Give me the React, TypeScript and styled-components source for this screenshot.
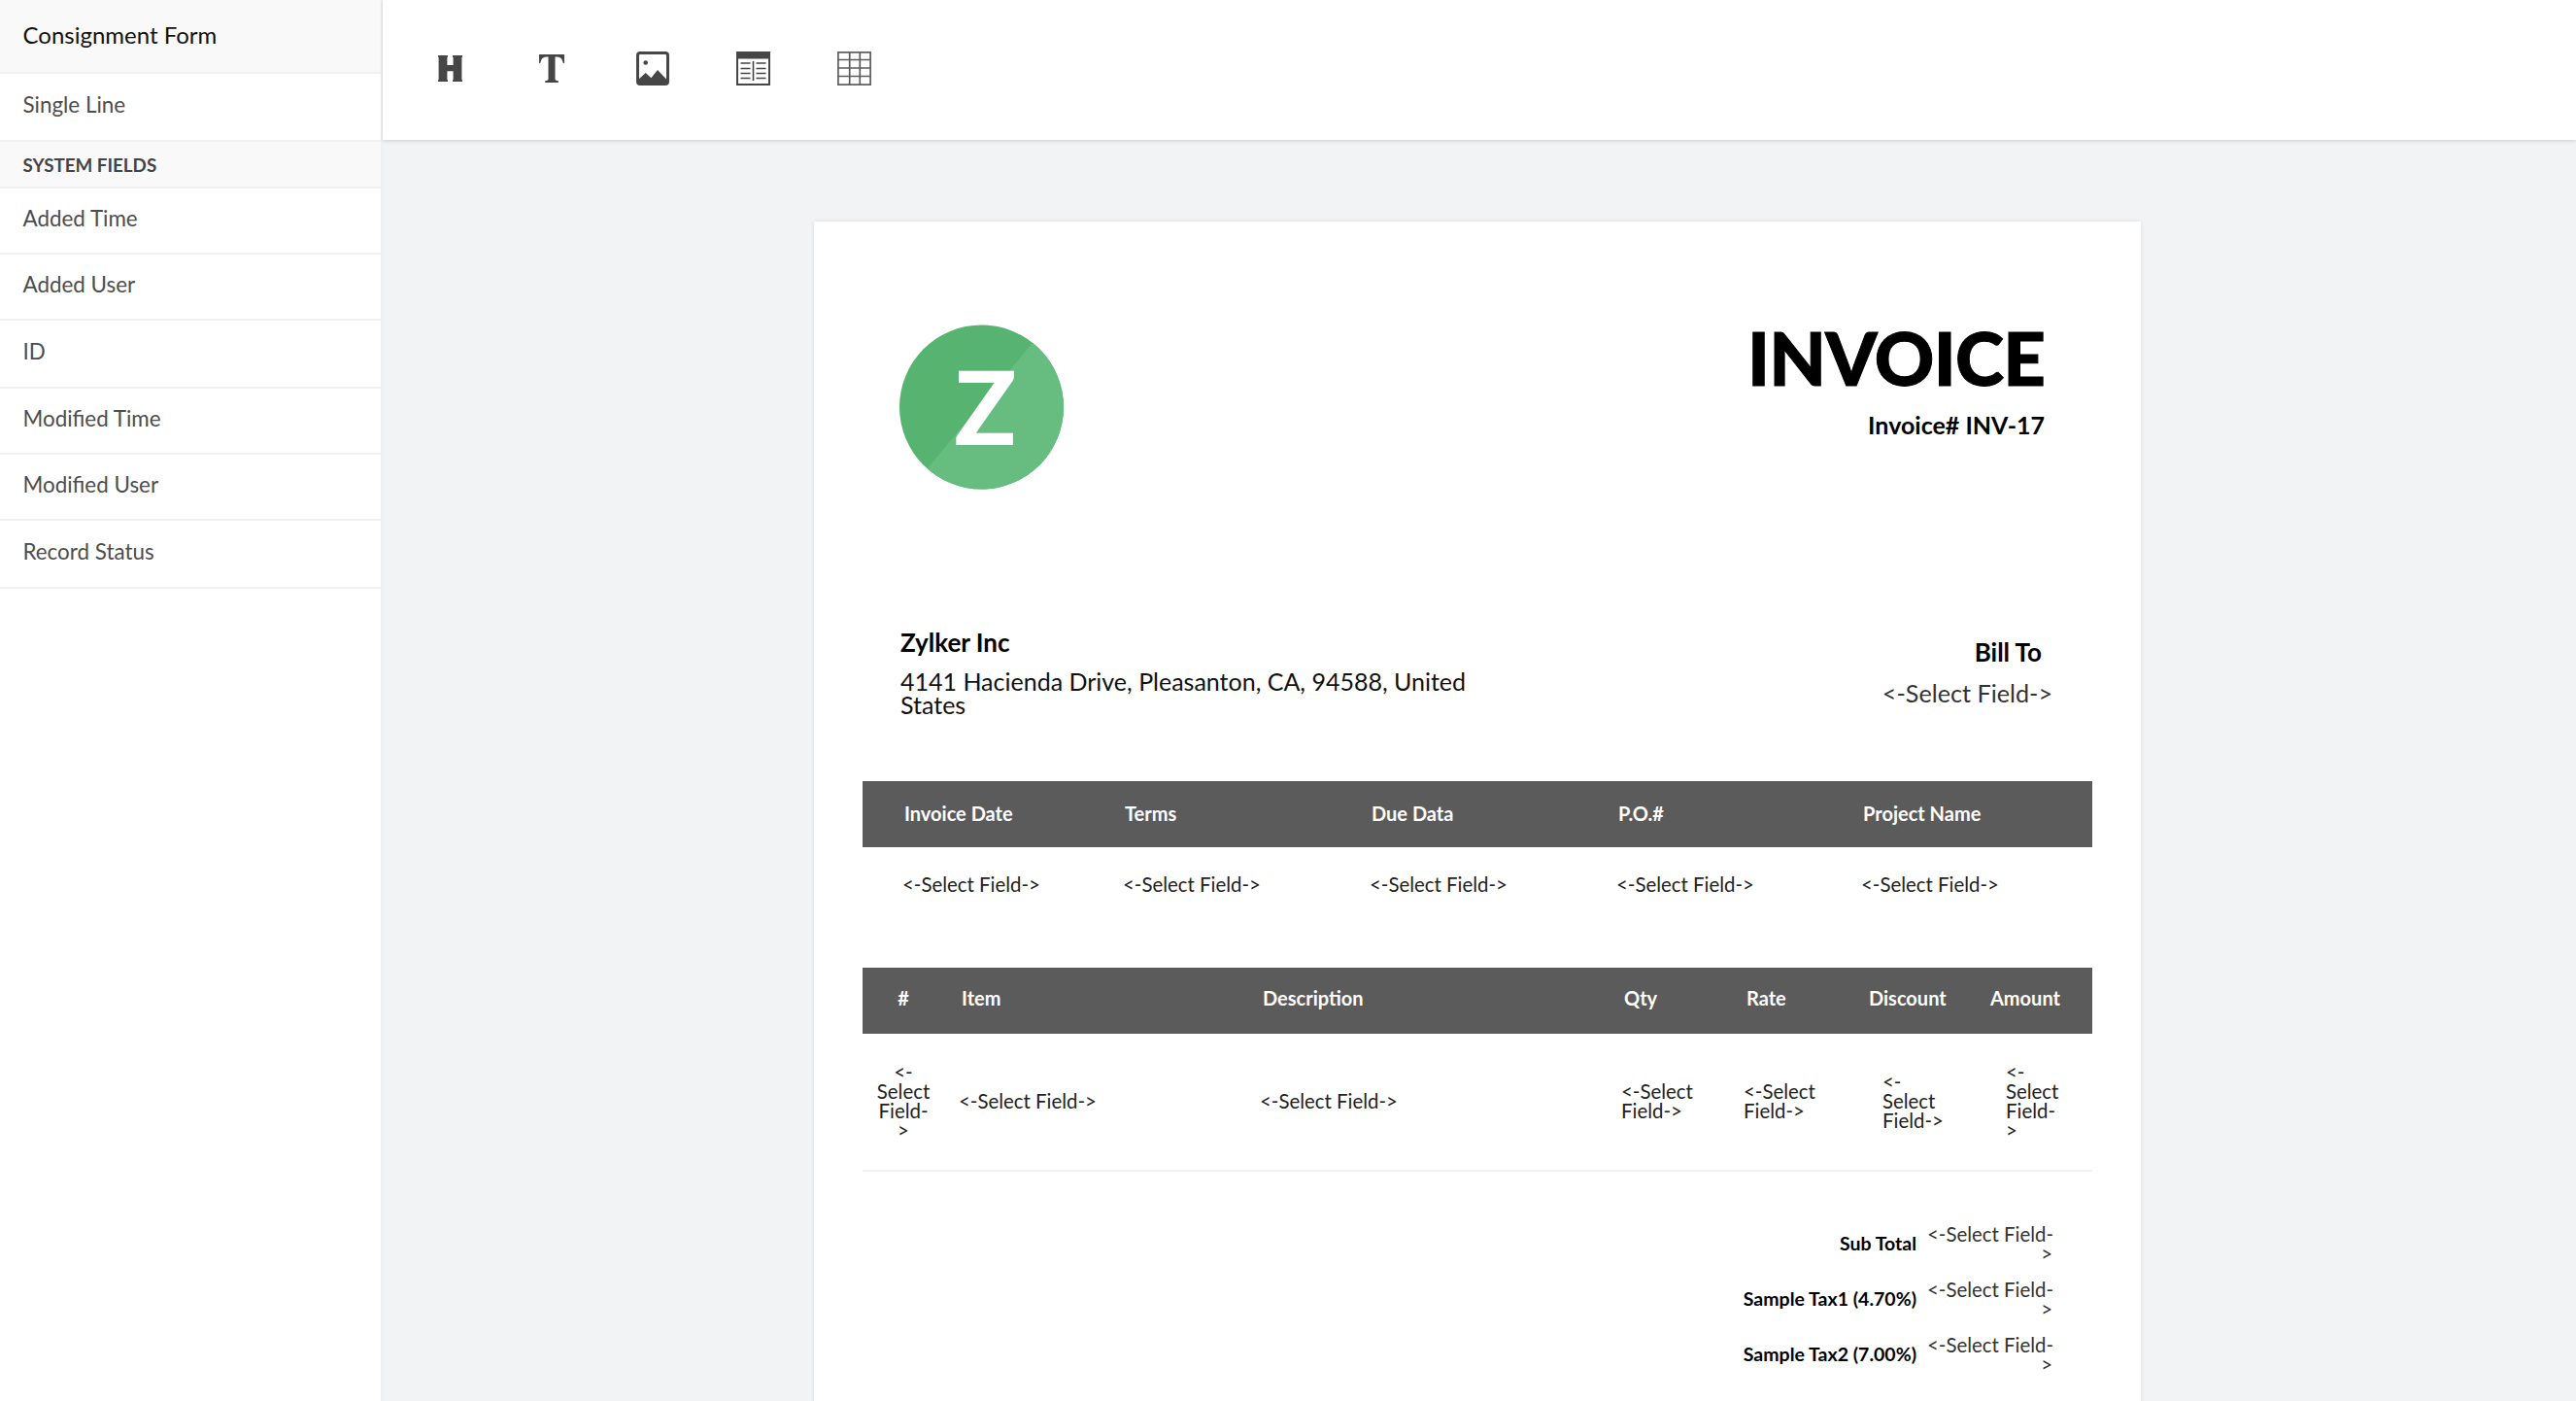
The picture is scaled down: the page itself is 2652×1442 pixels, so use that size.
import React from "react";
import styled, { createGlobalStyle } from "styled-components";

const Global = createGlobalStyle`
  html, body, #root { margin: 0; padding: 0; height: 100%; overflow: hidden; }
  body { font-family: "Lato", "Liberation Sans", sans-serif; background: #fff; }
`;
const Shell = styled.div`display: flex; height: 1442px; width: 2652px; overflow: hidden;`;
const Sidebar = styled.aside`width: 392px; flex: none; border-right: 2px solid #f0f0f0; background: #fff;`;
const FormTitle = styled.div`
  height: 70px; padding: 0 23.5px 4px; border-bottom: 2px solid #f1f1f1; background: #f9f9f9;
  display: flex; align-items: center; font-size: 24px; color: #111;
`;
const Field = styled.div<{ $h: number }>`
  height: ${p => p.$h - 5}px; border-bottom: 2px solid #f1f1f1; padding: 0 23.5px 5px;
  display: flex; align-items: center; font-size: 22.4px; color: #4d4d4d;
`;
const SectionLabel = styled.div`
  height: 46px; border-bottom: 2px solid #f1f1f1; background: #f9f9f9; padding: 0 23.5px;
  display: flex; align-items: center; font-size: 18.8px; font-weight: 700; color: #444;
`;
const Main = styled.main`flex: 1; min-width: 0; display: flex; flex-direction: column; background: #f2f3f5;`;
const Toolbar = styled.div`
  height: 144px; flex: none; box-sizing: border-box; background: #fff; box-shadow: 0 1px 4px rgba(0,0,0,.16);
  display: flex; align-items: center; position: relative;
  padding: 0 0 4px 17.5px;
`;
const ToolSlot = styled.div`width: 104px; height: 70px; display: flex; align-items: center; justify-content: center; svg { display: block; }`;
const Canvas = styled.div`flex: 1; padding: 84px 0 0 444px; overflow: hidden;`;
const Sheet = styled.div`width: 1366px; min-height: 1300px; background: #fff; box-shadow: 0 0 4px rgba(0,0,0,.1); padding: 0 50px; box-sizing: border-box;`;
const TopRow = styled.div`display: flex; justify-content: space-between; padding-top: 100px;`;
const Logo = styled.svg`display: block; margin: 6px 0 0 38px;`;
const TitleBlock = styled.div`padding-right: 49px; text-align: right;`;
const Title = styled.h1`margin: 0; font-size: 76px; line-height: 80px; font-weight: 900; letter-spacing: -0.8px; color: #000; -webkit-text-stroke: 1px #000;`;
const InvoiceNo = styled.div`margin-top: 14.5px; font-size: 25px; line-height: 28px; font-weight: 700; color: #000;`;
const AddressRow = styled.div`display: flex; justify-content: space-between; margin-top: 141.5px; height: 158.5px;`;
const Company = styled.div`padding-left: 39px; width: 640px;`;
const CompanyName = styled.div`font-size: 26px; line-height: 30px; font-weight: 700; color: #000;`;
const Address = styled.div`margin-top: 13px; font-size: 25px; line-height: 24px; color: #111;`;
const BillBlock = styled.div`padding: 10px 52px 0 0; text-align: right;`;
const BillTo = styled.div`font-size: 26px; line-height: 30px; font-weight: 700; color: #000;`;
const BillValue = styled.div`margin: 12.5px -11px 0 0; font-size: 25.2px; line-height: 30px; color: #333;`;
const Grid = styled.div<{ $cols: string }>`display: grid; grid-template-columns: ${p => p.$cols};`;
const HeadRow = styled(Grid)<{ $lift: number }>`
  background: #5b5b5b; height: 68px; box-sizing: border-box; padding-bottom: ${p => p.$lift}px; align-items: center;
`;
const HeadCell = styled.div<{ $pad: number; $center?: boolean }>`
  padding-left: ${p => p.$pad}px; font-size: 20px; font-weight: 700; color: #fff;
  ${p => p.$center ? "text-align:center;padding-left:0;" : ""}
`;
const BodyCell = styled.div<{ $pad: number; $center?: boolean }>`
  padding-left: ${p => p.$pad}px; font-size: 20.4px; line-height: 20px; color: #222;
  ${p => p.$center ? "text-align:center;padding-left:0;" : ""}
`;
const InfoRow = styled(Grid)`height: 79px; box-sizing: border-box; padding-bottom: 3px; align-items: center; margin-bottom: 45px;`;
const ItemRow = styled(Grid)`height: 142px; box-sizing: border-box; padding-bottom: 3px; align-items: center; border-bottom: 2px solid #f2f2f2;`;
const Totals = styled.div`margin-top: 45.5px; padding-right: 41px;`;
const TotalRow = styled.div`display: flex; justify-content: flex-end; align-items: center; height: 57px; gap: 11px;`;
const TotalLabel = styled.div`font-size: 19.5px; margin-top: -2px; font-weight: 700; color: #000;`;
const TotalValue = styled.div`width: 129px; font-size: 20.4px; line-height: 20px; color: #333; text-align: right; white-space: nowrap;`;

const dark = "#464646";
const IconH = () => <svg width="25" height="27" viewBox="0 0 25 27"><path fill={dark} d="M0 0h10v1.800h-.6V10h6.200V1.800H15V0h10v1.800h-.6v23.400h.6V27H15v-1.800h.6V16.200H9.400v9h.6V27H0v-1.800h.6V1.800H0z" /></svg>;
const IconT = () => <svg width="26" height="29" viewBox="0 0 26 29"><path fill={dark} d="M0 0h26v9h-1.300c-.6-3.500-2-6.300-6-6.600h-2.200v22.600c0 1.400.7 2 3.300 2.200V29H6.200v-1.800c2.600-.2 3.300-.8 3.300-2.200V2.400H7.300c-4 .3-5.400 3.100-6 6.600H0z" /></svg>;
const IconImage = () => (
  <svg width="34" height="35" viewBox="0 0 34 35">
    <rect x="1.500" y="1.500" width="31" height="32" rx="2.500" fill="none" stroke={dark} strokeWidth="3" />
    <circle cx="9.700" cy="11.500" r="2.300" fill={dark} />
    <path fill={dark} d="M2 29l7.700-7 5.600 5.300L22 19l10 10.500V33H2z" />
  </svg>
);
const IconForm = () => (
  <svg width="35" height="35" viewBox="0 0 35 35" fill="none" stroke={dark}>
    <rect x="1" y="1" width="33" height="33" strokeWidth="2" />
    <rect x="0" y="0" width="35" height="7.500" fill={dark} stroke="none" />
    <path strokeWidth="1.600" d="M17.500 10v20M4.500 12h10M20.500 12h10M4.500 17.500h10M20.500 17.500h10M4.500 22.500h10M20.500 22.500h10M4.500 27.500h10M20.500 27.500h10" />
  </svg>
);
const IconGrid = () => (
  <svg width="35" height="35" viewBox="0 0 35 35" fill="none" stroke="#5c5c5c" strokeWidth="1.700">
    <rect x=".9" y=".9" width="33.200" height="33.200" />
    <path d="M12.700 1v33M23.300 1v33M1 8.500h33M1 17h33M1 25.500h33" />
  </svg>
);

const LogoMark = () => (
  <Logo width="169" height="170" viewBox="0 0 170 170">
    <defs><clipPath id="disc"><circle cx="85" cy="85" r="85" /></clipPath></defs>
    <circle cx="85" cy="85" r="85" fill="#56b470" />
    <path clipPath="url(#disc)" fill="#67bc80" d="M153.500 0L10 171H170V0z" />
    <text x="89" y="124.500" textAnchor="middle" fontFamily="Lato, sans-serif" fontWeight="900" fontSize="106" fill="#fff">Z</text>
  </Logo>
);

const SELECT = "<-Select Field->";
const infoCols = "227px 254px 254px 252px 279px";
const infoHeads: [string, number][] = [["Invoice Date", 43], ["Terms", 43], ["Due Data", 43], ["P.O.#", 43], ["Project Name", 43]];
const itemCols = "84px 310px 372px 126px 126px 125px 123px";
const itemHeads: [string, number][] = [["Item", 18], ["Description", 18], ["Qty", 18], ["Rate", 18], ["Discount", 18], ["Amount", 18]];

const Lines = ({ items }: { items: string[] }) => <>{items.map((t, i) => <React.Fragment key={i}>{i > 0 && <br />}{t}</React.Fragment>)}</>;

const totals = ["Sub Total", "Sample Tax1 (4.70%)", "Sample Tax2 (7.00%)"];

export default function App() {
  return (
    <Shell>
      <Global />
      <Sidebar>
        <FormTitle>Consignment Form</FormTitle>
        <Field $h={68}>Single Line</Field>
        <SectionLabel>SYSTEM FIELDS</SectionLabel>
        <Field $h={66}>Added Time</Field>
        <Field $h={66}>Added User</Field>
        <Field $h={68}>ID</Field>
        <Field $h={66}>Modified Time</Field>
        <Field $h={66}>Modified User</Field>
        <Field $h={68}>Record Status</Field>
      </Sidebar>
      <Main>
        <Toolbar>
          <ToolSlot><IconH /></ToolSlot>
          <ToolSlot><IconT /></ToolSlot>
          <ToolSlot><IconImage /></ToolSlot>
          <ToolSlot><IconForm /></ToolSlot>
          <ToolSlot><IconGrid /></ToolSlot>
        </Toolbar>
        <Canvas>
          <Sheet>
            <TopRow>
              <LogoMark />
              <TitleBlock>
                <Title>INVOICE</Title>
                <InvoiceNo>Invoice# INV-17</InvoiceNo>
              </TitleBlock>
            </TopRow>
            <AddressRow>
              <Company>
                <CompanyName>Zylker Inc</CompanyName>
                <Address>4141 Hacienda Drive, Pleasanton, CA, 94588, United States</Address>
              </Company>
              <BillBlock>
                <BillTo>Bill To</BillTo>
                <BillValue>{SELECT}</BillValue>
              </BillBlock>
            </AddressRow>
            <HeadRow $cols={infoCols} $lift={3}>
              {infoHeads.map(([t, p]) => <HeadCell key={t} $pad={p}>{t}</HeadCell>)}
            </HeadRow>
            <InfoRow $cols={infoCols}>
              {infoHeads.map(([t]) => <BodyCell key={t} $pad={41}>{SELECT}</BodyCell>)}
            </InfoRow>
            <HeadRow $cols={itemCols} $lift={7}>
              <HeadCell $pad={0} $center>#</HeadCell>
              {itemHeads.map(([t, p]) => <HeadCell key={t} $pad={p}>{t}</HeadCell>)}
            </HeadRow>
            <ItemRow $cols={itemCols}>
              <BodyCell $pad={0} $center><Lines items={["<-", "Select", "Field-", ">"]} /></BodyCell>
              <BodyCell $pad={15}>{SELECT}</BodyCell>
              <BodyCell $pad={15}>{SELECT}</BodyCell>
              <BodyCell $pad={15}><Lines items={["<-Select", "Field->"]} /></BodyCell>
              <BodyCell $pad={15}><Lines items={["<-Select", "Field->"]} /></BodyCell>
              <BodyCell $pad={32}><Lines items={["<-", "Select", "Field->"]} /></BodyCell>
              <BodyCell $pad={34}><Lines items={["<-", "Select", "Field-", ">"]} /></BodyCell>
            </ItemRow>
            <Totals>
              {totals.map(t => (
                <TotalRow key={t}>
                  <TotalLabel>{t}</TotalLabel>
                  <TotalValue><Lines items={["<-Select Field-", ">"]} /></TotalValue>
                </TotalRow>
              ))}
            </Totals>
          </Sheet>
        </Canvas>
      </Main>
    </Shell>
  );
}
